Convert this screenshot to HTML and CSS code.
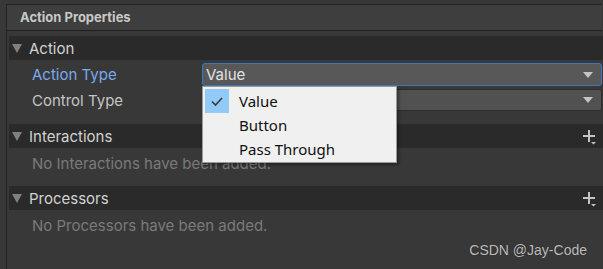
FILE: index.html
```html
<!DOCTYPE html>
<html lang="en">
<head>
    <meta charset="UTF-8">
    <title>Action Properties</title>
    <link rel="stylesheet" href="styles.css">
</head>
<body>
    <div class="panel">
        <div class="title">Action Properties</div>

        <div class="section">
            <div class="foldout">
                <span class="arrow"></span>
                <span class="foldout-label">Action</span>
            </div>

            <div class="field">
                <div class="field-label focused">Action Type</div>
                <div class="dropdown-wrap">
                    <div class="dropdown active">
                        <span>Value</span>
                        <span class="caret"></span>
                    </div>

                    <ul class="menu">
                        <li class="menu-item checked">
                            <span class="check">
                                <svg viewBox="0 0 24 24" width="24" height="24">
                                    <path d="M7 12.5 L10.5 16 L17 9" fill="none" stroke="#3a3a3a" stroke-width="1.6"/>
                                </svg>
                            </span>
                            Value
                        </li>
                        <li class="menu-item"><span class="check"></span>Button</li>
                        <li class="menu-item"><span class="check"></span>Pass Through</li>
                    </ul>
                </div>
            </div>

            <div class="field">
                <div class="field-label">Control Type</div>
                <div class="dropdown-wrap">
                    <div class="dropdown">
                        <span></span>
                        <span class="caret"></span>
                    </div>
                </div>
            </div>
        </div>

        <div class="section spaced">
            <div class="foldout">
                <span class="arrow"></span>
                <span class="foldout-label">Interactions</span>
                <svg class="plus" viewBox="0 0 16 16" width="16" height="16">
                    <rect x="1" y="5" width="12" height="2" fill="#c4c4c4"/>
                    <rect x="6" y="0" width="2" height="12" fill="#c4c4c4"/>
                    <path d="M9 12 H14 L11.5 14.5 Z" fill="#c4c4c4"/>
                </svg>
            </div>
            <div class="empty">No Interactions have been added.</div>
        </div>

        <div class="section flush">
            <div class="foldout">
                <span class="arrow"></span>
                <span class="foldout-label">Processors</span>
                <svg class="plus" viewBox="0 0 16 16" width="16" height="16">
                    <rect x="1" y="5" width="12" height="2" fill="#c4c4c4"/>
                    <rect x="6" y="0" width="2" height="12" fill="#c4c4c4"/>
                    <path d="M9 12 H14 L11.5 14.5 Z" fill="#c4c4c4"/>
                </svg>
            </div>
            <div class="empty">No Processors have been added.</div>
        </div>
    </div>

    <div class="watermark">CSDN @Jay-Code</div>
</body>
</html>
```

FILE: styles.css
```css
* {
    margin: 0;
    padding: 0;
    box-sizing: border-box;
}

body {
    font-family: Inter, 'Noto Sans', sans-serif;
    background: #383838;
    width: 603px;
    height: 269px;
    overflow: hidden;
    position: relative;
}

.panel {
    margin: 4px 1px 0 6px;
    border-top: 1px solid #232323;
    border-left: 1px solid #232323;
    height: 265px;
}

.title {
    height: 26px;
    background: #3e3e3e;
    border-bottom: 1px solid #1f1f1f;
    padding-left: 13px;
    font-size: 13px;
    font-weight: 700;
    color: #c8c8c8;
    line-height: 25px;
}

.section {
    padding-top: 5px;
}

.section.spaced {
    padding-top: 13px;
}

.section.flush {
    padding-top: 0;
}

.foldout {
    height: 24px;
    margin-left: 2px;
    margin-right: -1px;
    background: #2a2a2a;
    display: flex;
    align-items: center;
    padding-right: 5px;
}

.arrow {
    width: 0;
    height: 0;
    margin: 0 7px 0 3px;
    border-left: 5px solid transparent;
    border-right: 5px solid transparent;
    border-top: 9px solid #808080;
}

.foldout-label {
    flex: 1;
    font-size: 15px;
    color: #d2d2d2;
}

.plus {
    margin-top: 3px;
}

.field {
    display: flex;
    align-items: center;
    margin-top: 3px;
}

.field-label {
    width: 195px;
    padding-left: 25px;
    font-size: 15px;
    color: #c4c4c4;
}

.field-label.focused {
    color: #7aaaee;
}

.dropdown-wrap {
    flex: 1;
    position: relative;
}

.dropdown {
    height: 22px;
    background: #515151;
    border: 1px solid #2e2e2e;
    border-radius: 3px;
    display: flex;
    align-items: center;
    justify-content: space-between;
    padding: 0 8px 0 3px;
    font-size: 15px;
    color: #e2e2e2;
}

.dropdown.active {
    height: 23px;
    background: #585858;
    border-color: #3a79bb;
}

.caret {
    width: 0;
    height: 0;
    border-left: 5px solid transparent;
    border-right: 5px solid transparent;
    border-top: 6px solid #c4c4c4;
}

.menu {
    position: absolute;
    left: 0;
    top: 23px;
    width: 195px;
    height: 77px;
    list-style: none;
    background: #f0f0f0;
    border: 1px solid #9a9a9a;
    box-shadow: 2px 2px 3px rgba(0, 0, 0, 0.35);
    padding: 2px;
    z-index: 5;
}

.menu-item {
    height: 24px;
    display: flex;
    align-items: center;
    font-family: 'Noto Sans', 'Open Sans', sans-serif;
    font-size: 15px;
    color: #111;
}

.check {
    width: 24px;
    height: 24px;
    margin-right: 10px;
}

.menu-item.checked .check {
    background: #91c9f7;
}

.empty {
    height: 38px;
    padding: 6px 0 0 25px;
    font-size: 15px;
    line-height: 20px;
    color: #7a7a7a;
}

.watermark {
    position: absolute;
    right: 16px;
    top: 242px;
    font-family: 'Liberation Sans', Arial, sans-serif;
    font-size: 14px;
    color: #bdbdbd;
    text-shadow: 0 0 1px #222;
}
```
